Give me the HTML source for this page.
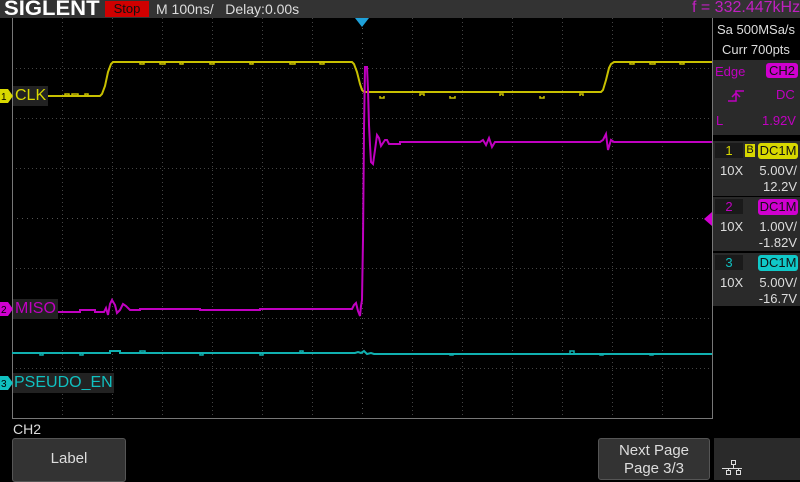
<!DOCTYPE html>
<html><head><style>
body{margin:0;width:800px;height:480px;background:#000;overflow:hidden;font-family:"Liberation Sans",sans-serif;position:relative}
.a{position:absolute}
.t{color:#ddd;font-size:13px}
</style></head><body>
<div class="a" style="left:0;top:0;width:800px;height:18px;background:#333"></div>
<div class="a" style="left:4px;top:-3px;font:bold 21px 'Liberation Sans';color:#fff;transform:scaleX(1.05);transform-origin:left">SIGLENT</div>
<div class="a" style="left:105px;top:1px;width:44px;height:16px;background:#d00000;color:#111;font-size:13px;text-align:center;line-height:16px">Stop</div>
<div class="a t" style="left:156px;top:1px;font-size:14px;color:#ddd">M 100ns/&nbsp;&nbsp; Delay:0.00s</div>
<div class="a" style="left:692px;top:-1px;font-size:16px;color:#c020c0;white-space:nowrap">f = 332.447kHz</div>

<svg class="a" style="left:0;top:0" width="800" height="480">
<g stroke="#444" stroke-dasharray="1 3" stroke-width="1">
<path d="M62.5 18V418M112.5 18V418M162.5 18V418M212.5 18V418M262.5 18V418M312.5 18V418M412.5 18V418M462.5 18V418M512.5 18V418M562.5 18V418M612.5 18V418M662.5 18V418"/>
<path d="M12 68.5H712M12 118.5H712M12 168.5H712M12 268.5H712M12 318.5H712M12 368.5H712"/>
<path d="M362.5 18V418M12 218.5H712" stroke="#555" stroke-dasharray="1 4"/>
</g>
<path d="M12.5 18V418.5H712.5V18" fill="none" stroke="#777"/>
<path d="M355 18h14l-7 9z" fill="#1ea0d8"/>
<!-- CLK -->
<path d="M47 96H100l2-2l3-8l3-14l3-8l2-2H352l2 2l3 8l3 12l2 6l2 2H601l2-2l3-10l3-12l2-4l3-2H712" fill="none" stroke="#c8c000" stroke-width="2"/>
<g fill="none" stroke="#c8c000" stroke-width="1.5">
<path d="M65 96v-2h4v2M72 96v-2h6v2M85 96v-2h3v2M140 62v2h4v-2M160 62v2h5v-2M180 62v2h3v-2M210 62v2h4v-2M250 62v2h3v-2M290 62v2h5v-2M320 62v2h4v-2M380 96v2h4v-2M420 96v-2h4v2M450 96v2h5v-2M500 96v-2h3v2M540 96v2h4v-2M580 96v-2h3v2M630 62v2h4v-2M650 62v2h5v-2M680 62v2h4v-2"/>
</g>
<!-- MISO -->
<path d="M55 312H80V310H95V312H104L106 308L108 315L110 304L112 300L115 305L117 313L120 310L123 304L126 306L130 310H140V309H200V310H260V309H352L354 305L356 303L358 311L360 316L361 306L362 300L363 240L364 130L365 67H367L368 90L369 125L370 145L371 162L373 164L375 150L377 135L379 138L381 146L383 143L385 140L387 140L389 144H400V142H480L483 140L486 145L489 138L492 147L495 142H600L603 140L606 134L608 150L611 140L614 142H712" fill="none" stroke="#c000c0" stroke-width="2"/>
<!-- cyan -->
<path d="M12 353H110v-2h10v2H355l3-1l3 1l3-2l3 3l4-1l3 1H712" fill="none" stroke="#10b0b0" stroke-width="2"/>
<path d="M140 353v-2h5v2M300 353v-2h3v2M570 353v-2h4v2M40 353v2h3v-2M80 353v2h3v-2M200 353v2h3v-2M260 353v2h3v-2M450 353v2h3v-2M600 353v2h3v-2M650 353v2h3v-2" fill="none" stroke="#10b0b0" stroke-width="1.5"/>
<!-- markers -->
<path d="M0 89h8l5 7l-5 7H0z" fill="#d8d800"/>
<path d="M0 302h8l5 7l-5 7H0z" fill="#d000d0"/>
<path d="M0 376h8l5 7l-5 7H0z" fill="#10c0c0"/>
<text x="1" y="100" font-size="10" font-family="Liberation Sans">1</text>
<text x="1" y="313" font-size="10" font-family="Liberation Sans">2</text>
<text x="1" y="387" font-size="10" font-family="Liberation Sans">3</text>
<path d="M712 212l-8 7 8 7z" fill="#d000d0"/>
<g fill="none" stroke="#ddd" stroke-width="1"><rect x="731.5" y="460.5" width="4" height="4"/><rect x="726.5" y="470.5" width="4" height="4"/><rect x="736.5" y="470.5" width="4" height="4"/><path d="M733.5 465v3M722 468.5h20M728.5 468v2M738.5 468v2"/></g>
</svg>

<div class="a" style="left:13px;top:86px;background:#222;color:#d8d800;font-size:16px;padding:0 2px;line-height:20px">CLK</div>
<div class="a" style="left:13px;top:299px;background:#222;color:#c000c0;font-size:16px;padding:0 2px;line-height:20px">MISO</div>
<div class="a" style="left:13px;top:373px;background:#222;color:#10c0c0;font-size:16px;padding:0 1px;line-height:20px">PSEUDO_EN</div>

<div class="a" style="left:713px;top:19px;width:87px;height:40px;background:#000">
<div class="t a" style="left:4px;top:3px">Sa 500MSa/s</div>
<div class="t a" style="left:9px;top:23px">Curr 700pts</div></div>
<div class="a" style="left:713px;top:60px;width:87px;height:75px;background:#2a2a2a;color:#c000c0;font-size:13px">
<div class="a" style="left:2px;top:4px">Edge</div>
<div class="a" style="left:53px;top:3px;background:#d000d0;color:#111;border-radius:3px;padding:0 3px;font-size:13px">CH2</div>
<svg class="a" style="left:14px;top:29px" width="20" height="14"><path d="M1 12h8V2h8M5 8l4-4 4 4" fill="none" stroke="#c000c0" stroke-width="1.5"/></svg>
<div class="a" style="left:63px;top:27px">DC</div>
<div class="a" style="left:3px;top:53px">L</div>
<div class="a" style="left:49px;top:53px">1.92V</div></div>

<div class="a" style="left:713px;top:141px;width:87px;height:55px;background:#2a2a2a">
<div class="a" style="left:2px;top:2px;width:28px;height:15px;background:#1a1a1a;color:#d8d800;font-size:13px;text-align:center">1</div>
<div class="a" style="left:32px;top:3px;width:10px;height:13px;background:#d8d800;color:#111;font-size:11px;text-align:center;line-height:13px">B</div>
<div class="a" style="left:45px;top:2px;width:40px;height:16px;background:#d8d800;border-radius:3px;color:#111;font-size:13px;text-align:center;line-height:16px">DC1M</div>
<div class="a t" style="left:7px;top:22px">10X</div><div class="a t" style="right:3px;top:22px">5.00V/</div>
<div class="a t" style="right:3px;top:38px">12.2V</div></div>

<div class="a" style="left:713px;top:197px;width:87px;height:54px;background:#2a2a2a">
<div class="a" style="left:2px;top:2px;width:28px;height:15px;background:#1a1a1a;color:#c000c0;font-size:13px;text-align:center">2</div>
<div class="a" style="left:45px;top:2px;width:40px;height:16px;background:#d000d0;border-radius:3px;color:#111;font-size:13px;text-align:center;line-height:16px">DC1M</div>
<div class="a t" style="left:7px;top:22px">10X</div><div class="a t" style="right:3px;top:22px">1.00V/</div>
<div class="a t" style="right:3px;top:38px">-1.82V</div></div>

<div class="a" style="left:713px;top:253px;width:87px;height:53px;background:#2a2a2a">
<div class="a" style="left:2px;top:2px;width:28px;height:15px;background:#1a1a1a;color:#10c0c0;font-size:13px;text-align:center">3</div>
<div class="a" style="left:45px;top:2px;width:40px;height:16px;background:#10c8c8;border-radius:3px;color:#111;font-size:13px;text-align:center;line-height:16px">DC1M</div>
<div class="a t" style="left:7px;top:22px">10X</div><div class="a t" style="right:3px;top:22px">5.00V/</div>
<div class="a t" style="right:3px;top:38px">-16.7V</div></div>

<div class="a t" style="left:13px;top:421px;font-size:14px">CH2</div>
<div class="a" style="left:12px;top:438px;width:112px;height:42px;background:#333;border:1px solid #555;border-radius:3px;color:#ddd;font-size:15px;text-align:center;line-height:40px">Label</div>
<div class="a" style="left:598px;top:438px;width:112px;height:42px;background:#333;border:1px solid #555;border-radius:3px;color:#ddd;font-size:15px;text-align:center;line-height:18px;padding-top:3px;box-sizing:border-box">Next Page<br>Page 3/3</div>
<div class="a" style="left:714px;top:438px;width:86px;height:42px;background:#2a2a2a;z-index:-1"></div>
</body></html>
